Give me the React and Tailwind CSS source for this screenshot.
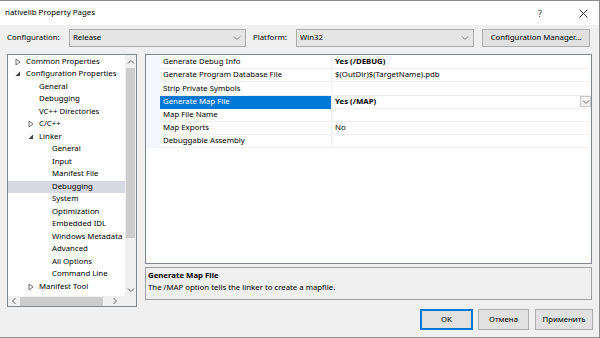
import React from 'react';

const tree = [
  { label: 'Common Properties', level: 0, arrow: 'closed' },
  { label: 'Configuration Properties', level: 0, arrow: 'open' },
  { label: 'General', level: 1 },
  { label: 'Debugging', level: 1 },
  { label: 'VC++ Directories', level: 1 },
  { label: 'C/C++', level: 1, arrow: 'closed' },
  { label: 'Linker', level: 1, arrow: 'open' },
  { label: 'General', level: 2 },
  { label: 'Input', level: 2 },
  { label: 'Manifest File', level: 2 },
  { label: 'Debugging', level: 2, selected: true },
  { label: 'System', level: 2 },
  { label: 'Optimization', level: 2 },
  { label: 'Embedded IDL', level: 2 },
  { label: 'Windows Metadata', level: 2 },
  { label: 'Advanced', level: 2 },
  { label: 'All Options', level: 2 },
  { label: 'Command Line', level: 2 },
  { label: 'Manifest Tool', level: 1, arrow: 'closed' },
];

const props = [
  { name: 'Generate Debug Info', value: 'Yes (/DEBUG)', bold: true },
  { name: 'Generate Program Database File', value: '$(OutDir)$(TargetName).pdb' },
  { name: 'Strip Private Symbols', value: '' },
  { name: 'Generate Map File', value: 'Yes (/MAP)', bold: true, selected: true },
  { name: 'Map File Name', value: '' },
  { name: 'Map Exports', value: 'No' },
  { name: 'Debuggable Assembly', value: '' },
];

const Chevron = ({ dir = 'down', className = '' }) => {
  const d = {
    down: 'M1 2.5 L4 5.5 L7 2.5',
    up: 'M1 5.5 L4 2.5 L7 5.5',
    left: 'M5.5 1 L2.5 4 L5.5 7',
    right: 'M2.5 1 L5.5 4 L2.5 7',
  }[dir];
  return (
    <svg width="8" height="8" viewBox="0 0 8 8" className={className}>
      <path d={d} fill="none" stroke="currentColor" strokeWidth="1" />
    </svg>
  );
};

const Arrow = ({ type }) =>
  type === 'open' ? (
    <svg width="6" height="6" viewBox="0 0 6 6">
      <path d="M5 0.5 L5 5 L0.5 5 Z" fill="#404040" />
    </svg>
  ) : (
    <svg width="6" height="8" viewBox="0 0 6 8">
      <path d="M1 1 L5 4 L1 7 Z" fill="none" stroke="#606060" strokeWidth="0.9" />
    </svg>
  );

const Combo = ({ value, width }) => (
  <div className={`${width} h-[18px] bg-[#e5e5e5] border border-[#acacac] flex items-center pl-[3px] pr-[4px]`}>
    <span>{value}</span>
    <Chevron className="ml-auto text-[#808080]" />
  </div>
);

const Button = ({ children, width, primary }) => (
  <div
    className={`${width} h-[21px] bg-[#e1e1e1] flex items-center justify-center ${
      primary ? 'border-2 border-[#0078d7]' : 'border border-[#adadad]'
    }`}
  >
    {children}
  </div>
);

export default function App() {
  return (
    <div
      className="w-[600px] h-[338px] bg-[#f0f0f0] border-t border-r border-b border-[#8c8c8c] flex flex-col text-[7.8px] text-black leading-none overflow-hidden"
      style={{ fontFamily: '"Noto Sans", sans-serif' }}
    >
      {/* Title bar */}
      <div className="h-[24px] bg-white flex items-center pl-[5px] shrink-0">
        <span className="text-[7.9px]">nativelib Property Pages</span>
        <span className="ml-auto text-[9px] text-[#333] mr-[37px]">?</span>
        <svg width="9" height="9" viewBox="0 0 9 9" className="mr-[11px]">
          <path d="M0.5 0.5 L8.5 8.5 M8.5 0.5 L0.5 8.5" stroke="#222" strokeWidth="0.9" />
        </svg>
      </div>

      {/* Configuration row */}
      <div className="flex items-center h-[18px] mt-[4px] pl-[7px] shrink-0">
        <span className="w-[62px]">Configuration:</span>
        <Combo value="Release" width="w-[177px]" />
        <span className="ml-[7px] w-[43px]">Platform:</span>
        <Combo value="Win32" width="w-[178px]" />
        <div className="ml-[8px] w-[108px] h-[18px] bg-[#e1e1e1] border border-[#adadad] flex items-center justify-center">
          Configuration Manager...
        </div>
      </div>

      {/* Main */}
      <div className="flex mt-[7px] pl-[7px] gap-[8px] shrink-0">
        {/* Tree */}
        <div className="w-[130px] h-[253px] bg-white border border-[#828790] flex flex-col">
          <div className="flex flex-1 min-h-0">
            <div className="flex-1 min-w-0 overflow-hidden pt-[0.5px]">
              {tree.map((t, i) => (
                <div
                  key={i}
                  className={`h-[12.5px] flex items-center whitespace-nowrap ${t.selected ? 'bg-[#d9d9e6]' : ''}`}
                  style={{ paddingLeft: 7 + t.level * 13 }}
                >
                  <span className="w-[11px] shrink-0 flex items-center">{t.arrow && <Arrow type={t.arrow} />}</span>
                  <span className="shrink-0">{t.label}</span>
                </div>
              ))}
            </div>
            <div className="w-[11px] bg-[#f0f0f0] flex flex-col items-center">
              <div className="h-[13px] flex items-center text-[#606060]">
                <Chevron dir="up" />
              </div>
              <div className="w-[9px] h-[170px] bg-[#cdcdcd]" />
              <div className="mt-auto h-[13px] flex items-center text-[#606060]">
                <Chevron dir="down" />
              </div>
            </div>
          </div>
          <div className="h-[10px] flex bg-[#f0f0f0]">
            <div className="w-[12px] flex items-center justify-center text-[#606060]">
              <Chevron dir="left" />
            </div>
            <div className="w-[83px] h-[9px] mt-[0.5px] bg-[#cdcdcd]" />
            <div className="w-[23px] flex items-center justify-center text-[#606060]">
              <Chevron dir="right" />
            </div>
            <div className="flex-1 bg-[#f0f0f0]" />
          </div>
        </div>

        {/* Right column */}
        <div className="w-[447px] flex flex-col">
          <div className="h-[210px] bg-white border border-[#828790] pt-[1px]">
            {props.map((p, i) => (
              <div key={i} className="h-[13.2px] flex">
                <div className="w-[14px] bg-[#f4f6fb]" />
                <div
                  className={`w-[171px] flex items-center pl-[3px] border-b ${
                    p.selected ? 'bg-[#0078d7] text-white border-[#0078d7]' : 'border-[#f0f0f0]'
                  }`}
                >
                  {p.name}
                </div>
                <div className="flex-1 flex items-center pl-[3px] border-l border-b border-[#f0f0f0]">
                  <span className={p.bold ? 'font-bold' : ''}>{p.value}</span>
                  {p.selected && (
                    <div className="ml-auto w-[11px] h-[11px] border border-[#c8c8c8] bg-[#f3f3f3] flex items-center justify-center text-[#707070]">
                      <Chevron />
                    </div>
                  )}
                </div>
              </div>
            ))}
          </div>
          <div className="h-[33px] mt-[3px] border border-[#a0a0a0] bg-[#f0f0f0] pl-[2px] pt-[4px] flex flex-col gap-[4px]">
            <span className="font-bold">Generate Map File</span>
            <span>The /MAP option tells the linker to create a mapfile.</span>
          </div>
        </div>
      </div>

      {/* Buttons */}
      <div className="flex justify-end mt-[2px] pr-[6px] shrink-0">
        <Button width="w-[53px]" primary>OK</Button>
        <div className="w-[5px]" />
        <Button width="w-[51px]">Отмена</Button>
        <div className="w-[6px]" />
        <Button width="w-[58px]">Применить</Button>
      </div>
    </div>
  );
}
